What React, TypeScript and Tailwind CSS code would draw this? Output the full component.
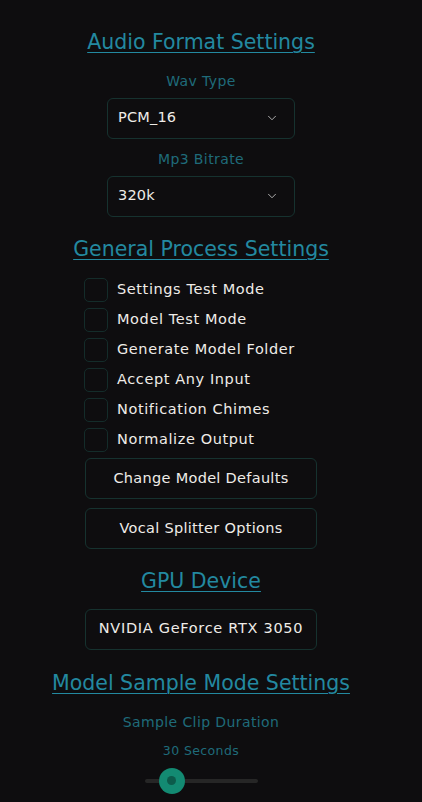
import React, { useState } from "react";
import { ChevronDown } from "lucide-react";

const body = { fontFamily: '"DejaVu Sans", "Liberation Sans", sans-serif' };

function Heading({ children }: { children: React.ReactNode }) {
  return (
    <div className="text-[20.5px] leading-none text-[#2389a0] underline underline-offset-[3px] decoration-1">
      {children}
    </div>
  );
}

function Label({ children, small }: { children: React.ReactNode; small?: boolean }) {
  return (
    <div
      className={`${small ? "text-[12.5px]" : "text-[14px]"} leading-none tracking-[0.4px] text-[#1f6b7a]`}
    >
      {children}
    </div>
  );
}

function Select({ value }: { value: string }) {
  return (
    <div className="flex h-[41px] w-[188px] items-center justify-between rounded-md border border-[#16322f] pl-[10px] pr-[15px]">
      <span className="text-[14.5px] tracking-[0.2px] text-[#efece8]">{value}</span>
      <ChevronDown size={14} strokeWidth={1.4} className="text-[#cfcfcf]" />
    </div>
  );
}

function Check({ label }: { label: string }) {
  const [on, setOn] = useState(false);
  return (
    <label className="flex h-[30px] cursor-pointer items-center gap-[9px]" onClick={() => setOn(!on)}>
      <span
        className={`h-[24px] w-[24px] rounded-[5px] border border-[#142c2a] ${on ? "bg-[#138a72]" : ""}`}
      />
      <span className="text-[14.5px] tracking-[0.6px] text-[#efece8]">{label}</span>
    </label>
  );
}

function Button({ children, wide }: { children: React.ReactNode; wide?: boolean }) {
  return (
    <div
      className={`flex h-[41px] w-[232px] items-center justify-center rounded-md border border-[#16322f] text-[14.5px] ${wide ? "tracking-[0.7px]" : "tracking-[0.3px]"} text-[#efece8]`}
    >
      {children}
    </div>
  );
}

const checks = [
  "Settings Test Mode",
  "Model Test Mode",
  "Generate Model Folder",
  "Accept Any Input",
  "Notification Chimes",
  "Normalize Output",
];

export default function App() {
  return (
    <div className="min-h-screen w-full bg-[#0e0d0f]" style={body}>
      <div className="flex w-[402px] flex-col items-center pt-[32px]">
        <Heading>Audio Format Settings</Heading>
        <div className="mt-[21px]">
          <Label>Wav Type</Label>
        </div>
        <div className="mt-[10px]">
          <Select value="PCM_16" />
        </div>
        <div className="mt-[13px]">
          <Label>Mp3 Bitrate</Label>
        </div>
        <div className="mt-[10px]">
          <Select value="320k" />
        </div>
        <div className="mt-[22px]">
          <Heading>General Process Settings</Heading>
        </div>
        <div className="mt-[16px] flex w-[234px] flex-col">
          {checks.map((c) => (
            <Check key={c} label={c} />
          ))}
        </div>
        <div className="mt-[3px]">
          <Button>Change Model Defaults</Button>
        </div>
        <div className="mt-[9px]">
          <Button>Vocal Splitter Options</Button>
        </div>
        <div className="mt-[22px]">
          <Heading>GPU Device</Heading>
        </div>
        <div className="mt-[17px]">
          <Button wide>NVIDIA GeForce RTX 3050</Button>
        </div>
        <div className="mt-[23px]">
          <Heading>Model Sample Mode Settings</Heading>
        </div>
        <div className="mt-[22px]">
          <Label>Sample Clip Duration</Label>
        </div>
        <div className="mt-[16px]">
          <Label small>30 Seconds</Label>
        </div>
        <div className="relative mt-[21px] h-[4px] w-[113px] rounded-full bg-[#262626]">
          <div className="absolute left-[27px] top-1/2 flex h-[26px] w-[26px] -translate-x-1/2 -translate-y-1/2 items-center justify-center rounded-full bg-[#138a72]">
            <div className="h-[9px] w-[9px] rounded-full bg-[#0c5b4b]" />
          </div>
        </div>
      </div>
    </div>
  );
}
